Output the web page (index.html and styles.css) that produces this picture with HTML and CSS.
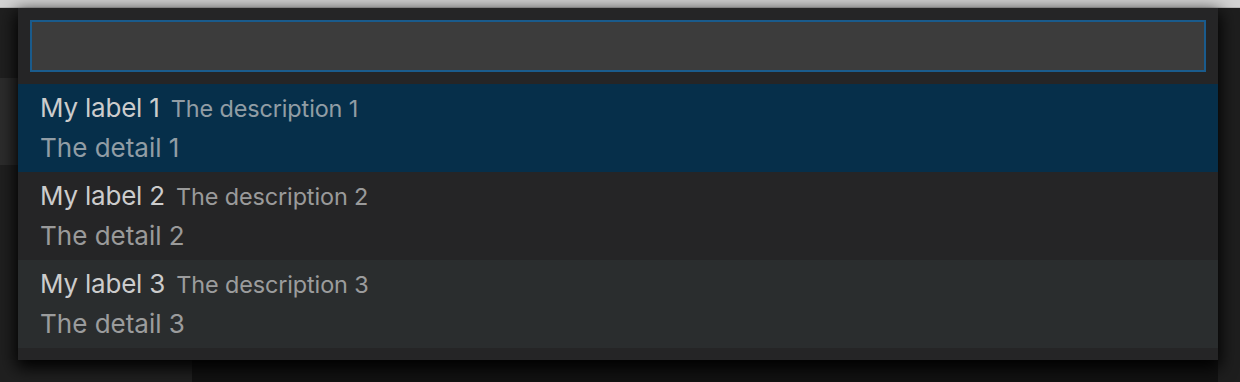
FILE: index.html
```html
<!DOCTYPE html>
<html>
<head>
<meta charset="utf-8">
<link rel="stylesheet" href="styles.css">
</head>
<body>
<div class="topbar"></div>
<div class="workspace">
  <div class="side-left">
    <div class="seg seg-a"></div>
    <div class="seg seg-b"></div>
    <div class="seg seg-c"></div>
    <div class="seg seg-d"></div>
  </div>
  <div class="center">
    <div class="quick-input">
      <div class="input-box"><input class="input" type="text"></div>
      <div class="list">
        <div class="row selected">
          <div class="line"><span class="label">My label 1</span><span class="desc">The description 1</span></div>
          <div class="line detail">The detail 1</div>
        </div>
        <div class="row">
          <div class="line"><span class="label">My label 2</span><span class="desc">The description 2</span></div>
          <div class="line detail">The detail 2</div>
        </div>
        <div class="row hover">
          <div class="line"><span class="label">My label 3</span><span class="desc">The description 3</span></div>
          <div class="line detail">The detail 3</div>
        </div>
      </div>
    </div>
    <div class="below">
      <div class="below-left"></div>
      <div class="below-right"></div>
    </div>
  </div>
  <div class="side-right"></div>
</div>
</body>
</html>
```

FILE: styles.css
```css
html, body {
  margin: 0;
  padding: 0;
  width: 1240px;
  height: 382px;
  overflow: hidden;
  background: #1e1e1e;
  font-family: Inter, "Noto Sans", sans-serif;
}
.topbar {
  height: 7px;
  background: #d3d3d3;
  border-bottom: 1px solid #b8b8b8;
}
.workspace {
  display: flex;
  height: 374px;
}
.side-left {
  width: 18px;
  display: flex;
  flex-direction: column;
}
.seg-a { height: 70px; background: #1f1f1f; }
.seg-b { height: 87px; background: #2c2c2c; }
.seg-c { height: 195px; background: #1f1f1f; }
.seg-d { flex: 1; background: #202020; }
.center {
  width: 1200px;
  display: flex;
  flex-direction: column;
  position: relative;
}
.quick-input {
  position: relative;
  z-index: 2;
  height: 352px;
  box-sizing: border-box;
  background: #252526;
  padding: 12px 0;
  box-shadow: 0 6px 16px 2px #000;
  display: flex;
  flex-direction: column;
  gap: 12px;
}
.input-box {
  margin: 0 12px;
  height: 52px;
  box-sizing: border-box;
  border: 2px solid #1a5b8c;
  background: #3c3c3c;
}
.input {
  width: 100%;
  height: 100%;
  box-sizing: border-box;
  border: 0;
  outline: 0;
  background: transparent;
  color: #cccccc;
  font: inherit;
  font-size: 26px;
  padding: 0 10px;
}
.list {
  display: flex;
  flex-direction: column;
}
.row {
  height: 88px;
  box-sizing: border-box;
  padding: 4px 0 4px 22px;
  background: #252526;
  color: #cccccc;
}
.row.selected { background: #062f4a; }
.row.hover { background: #2a2d2e; }
.line {
  height: 40px;
  line-height: 40px;
  white-space: nowrap;
}
.label {
  font-size: 26px;
  letter-spacing: -0.2px;
}
.desc {
  font-size: 23.4px;
  opacity: 0.7;
  margin-left: 11px;
  letter-spacing: -0.1px;
}
.detail {
  font-size: 26px;
  opacity: 0.7;
}
.below {
  flex: 1;
  display: flex;
}
.below-left { width: 174px; background: #202020; }
.below-right { flex: 1; background: #121212; }
.side-right {
  flex: 1;
  background: #1e1e1e;
}
```
